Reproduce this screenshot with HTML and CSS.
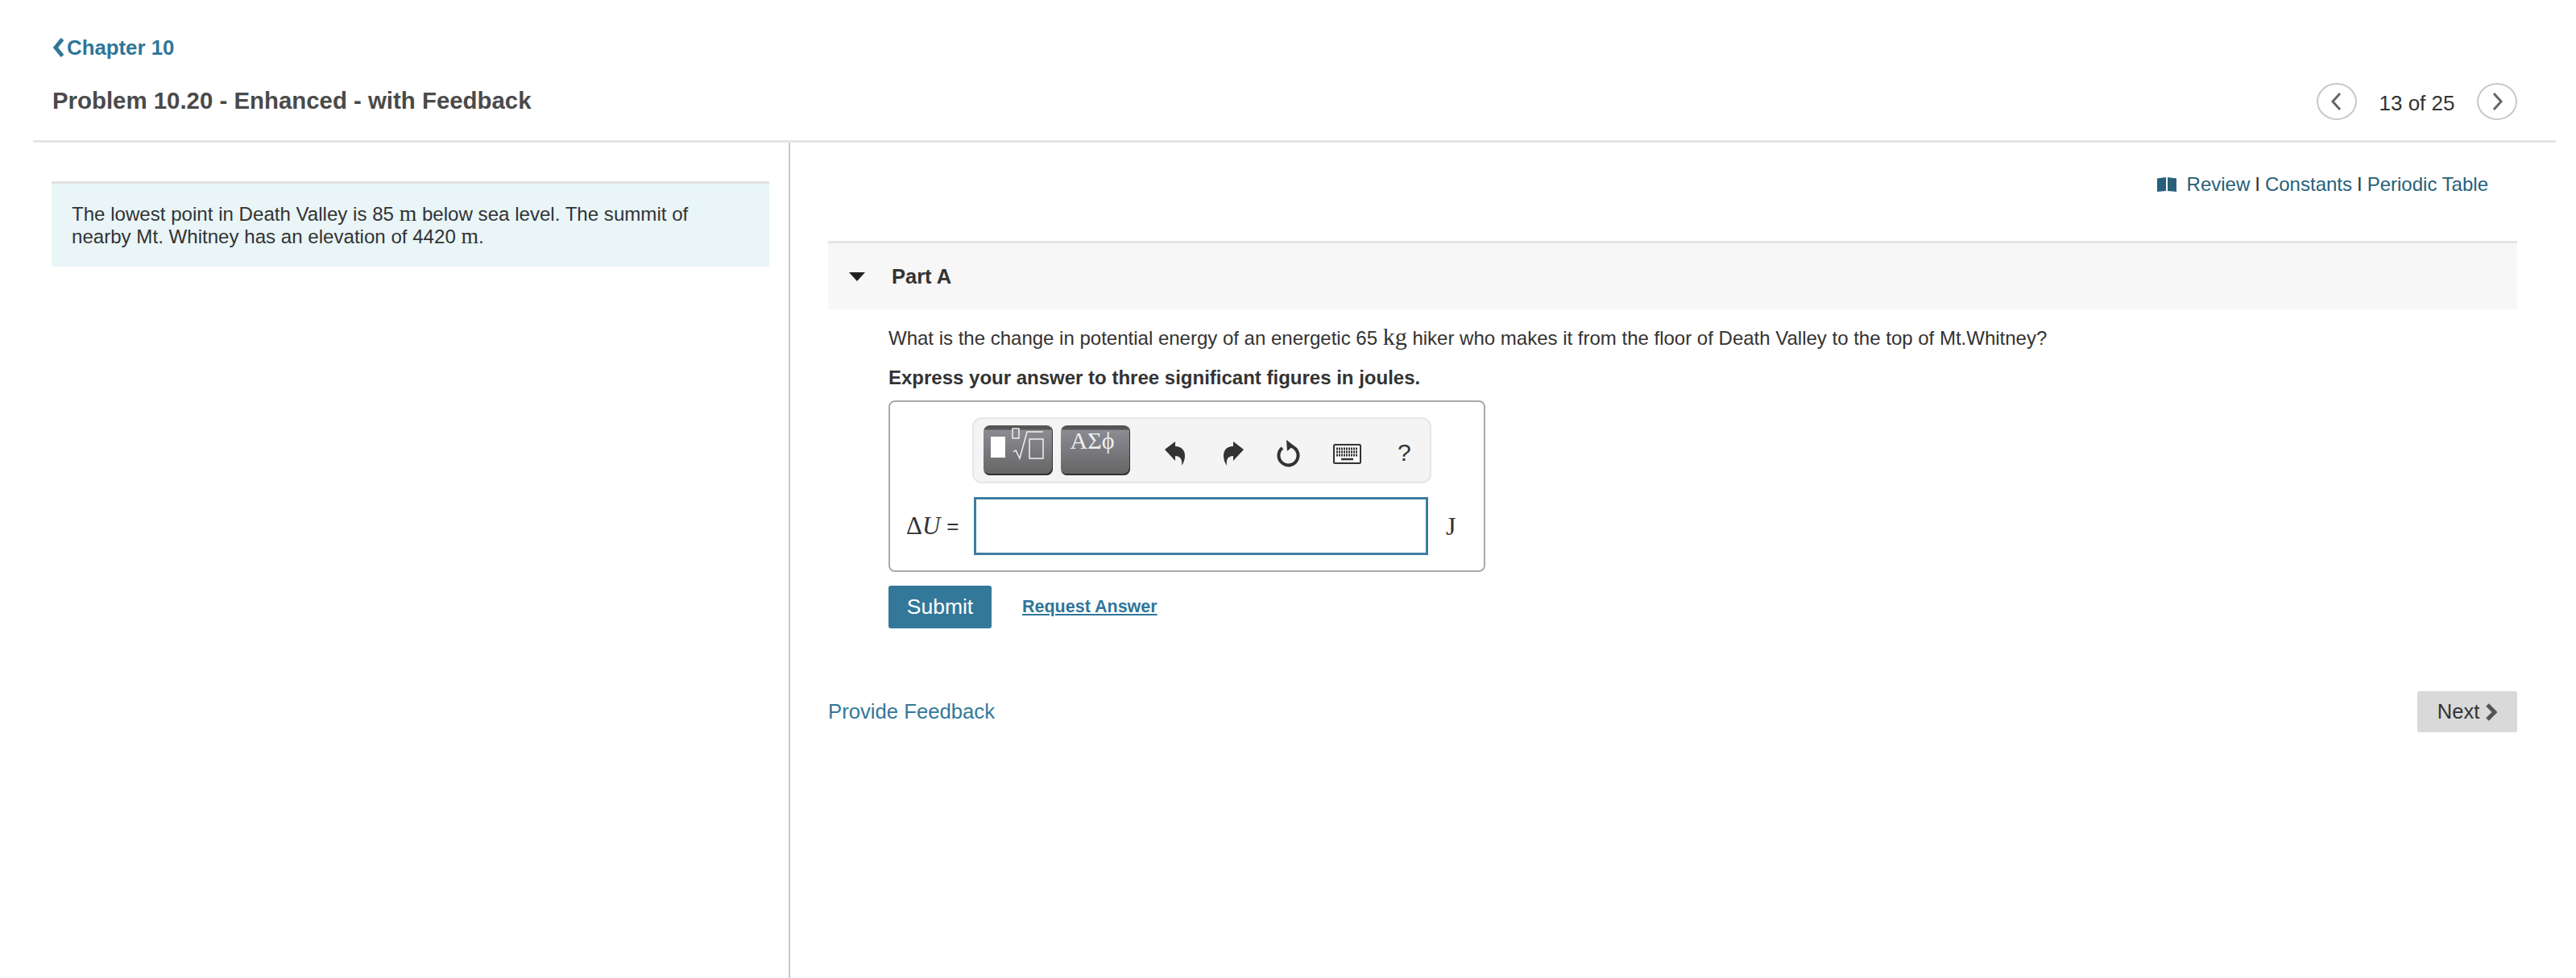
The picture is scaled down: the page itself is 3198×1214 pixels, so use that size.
FILE: index.html
```html
<!DOCTYPE html>
<html>
<head>
	<title>Problem 10.20 - Enhanced - with Feedback</title>
	<link rel="stylesheet" href="styles.css">
</head>
<body>
	<div class="header">
		<a class="chapter-link" href="#">
			<svg class="chapter-chevron" viewBox="0 0 15 26"><path d="M12.5 2.5 4 13l8.500 10.500" /></svg>
			<span>Chapter 10</span>
		</a>
		<div class="title-row">
			<h1 class="title">Problem 10.20 - Enhanced - with Feedback</h1>
			<div class="pager">
				<a class="pager-btn" href="#"><svg viewBox="0 0 46 42"><path d="M27 11 18 21l9 10" /></svg></a>
				<span class="pager-text">13 of 25</span>
				<a class="pager-btn" href="#"><svg viewBox="0 0 46 42"><path d="M19 11l9 10-9 10" /></svg></a>
			</div>
		</div>
	</div>

	<div class="columns">
		<div class="left-col">
			<div class="intro">
				<div>The lowest point in Death Valley is 85 <span class="math">m</span> below sea level. The summit of</div>
				<div>nearby Mt. Whitney has an elevation of 4420 <span class="math">m</span>.</div>
			</div>
		</div>

		<div class="right-col">
			<div class="resources">
				<svg class="book" viewBox="0 0 24 18"><path d="M0 1.500 11 0v17L0 18zM24 1.500 13 0v17l11 1z" /></svg>
				<a href="#">Review</a><span class="sep">I</span><a href="#">Constants</a><span class="sep">I</span><a href="#">Periodic Table</a>
			</div>

			<div class="part-head">
				<span class="part-arrow"></span>
				<span class="part-name">Part A</span>
			</div>

			<div class="part-body">
				<p class="question">What is the change in potential energy of an energetic 65 <span class="math kg">kg</span> hiker who makes it from the floor of Death Valley to the top of Mt.Whitney?</p>
				<p class="instruction">Express your answer to three significant figures in joules.</p>

				<div class="answer-box">
					<div class="toolbar">
						<button class="tool-btn">
							<svg viewBox="0 0 86 62">
								<rect x="9" y="14" width="18" height="26" fill="#fff" />
								<g fill="none" stroke="#f2f2f2" stroke-width="1.500">
									<rect x="36" y="4" width="8" height="12" />
									<rect x="57" y="17" width="17" height="24" />
									<path d="M37 33l3 -2 5 10 9 -33h20" />
								</g>
							</svg>
						</button>
						<button class="tool-btn tool-greek">ΑΣϕ</button>
						<svg class="tool-icon undo" viewBox="0 0 26 32"><path d="M0 11 13 1v6c8 0 12 5 12 12 0 5-2 9-4 12 1-7-1-12-8-12v6z" /></svg>
						<svg class="tool-icon redo" viewBox="0 0 26 32"><path d="M26 11 13 1v6C5 7 1 12 1 19c0 5 2 9 4 12-1-7 1-12 8-12v6z" /></svg>
						<svg class="tool-icon reset" viewBox="0 0 30 34"><path class="ring" d="M17 7.500a12 12 0 1 1-9 2.500" /><path d="M13 0l9 7-8 7z" /></svg>
						<svg class="tool-icon keys" viewBox="0 0 35 25">
							<rect x="1" y="1" width="33" height="23" rx="1.500" fill="#fff" stroke="#333" stroke-width="2" />
							<path d="M4 6h27M4 10h27M4 14h27" stroke="#333" stroke-width="3" stroke-dasharray="2 1" />
							<path d="M10 19h15" stroke="#333" stroke-width="2.500" />
						</svg>
						<span class="tool-help">?</span>
					</div>
					<div class="answer-row">
						<span class="answer-label"><span class="math-delta">Δ<i>U</i></span><span class="equals">=</span></span>
						<input class="answer-input" type="text">
						<span class="answer-unit">J</span>
					</div>
				</div>

				<div class="actions">
					<button class="submit">Submit</button>
					<a class="request" href="#">Request Answer</a>
				</div>
			</div>

			<div class="footer-row">
				<a class="feedback" href="#">Provide Feedback</a>
				<a class="next" href="#">Next<svg viewBox="0 0 15 24"><path d="M3 3l9 9-9 9" /></svg></a>
			</div>
		</div>
	</div>
</body>
</html>
```

FILE: styles.css
```css
html, body {
	margin: 0;
	height: 100%;
}

body {
	font-family: "Liberation Sans", Arial, sans-serif;
	color: #333;
	background: #fff;
	display: flex;
	flex-direction: column;
}

a {
	text-decoration: none;
}

.math {
	font-family: "Liberation Serif", serif;
	font-size: 1.15em;
	line-height: 0;
}

.kg {
	font-size: 1.25em;
}

/* header */
.header {
	margin: 0 25px 0 41px;
	padding: 41px 0 0 24px;
	height: 133px;
	border-bottom: 3px solid #e4e4e4;
	flex: none;
}

.chapter-link {
	display: flex;
	align-items: center;
	gap: 3px;
	height: 36px;
	color: #2f7698;
	font-size: 25.800px;
	font-weight: bold;
}

.chapter-chevron {
	width: 15px;
	height: 26px;
	fill: none;
	stroke: #2f7698;
	stroke-width: 5;
}

.title-row {
	display: flex;
	justify-content: space-between;
	align-items: center;
	margin-top: 23px;
	height: 50px;
	padding-right: 48px;
}

.title {
	margin: 0;
	font-size: 29.400px;
	font-weight: bold;
	color: #4a4a4a;
}

.pager {
	display: flex;
	align-items: center;
	margin-top: 2px;
}

.pager-btn {
	display: block;
	width: 50px;
	height: 46px;
	box-sizing: border-box;
	border: 2px solid #c8c8c8;
	border-radius: 50%;
}

.pager-btn svg {
	display: block;
	width: 46px;
	height: 42px;
	fill: none;
	stroke: #666;
	stroke-width: 3;
}

.pager-text {
	width: 149px;
	text-align: center;
	font-size: 26px;
	color: #333;
	padding-top: 4px;
}

/* two columns */
.columns {
	flex: 1;
	display: flex;
}

.left-col {
	box-sizing: border-box;
	padding: 48px 24px 0 64px;
	border-right: 2px solid #b9cddd;
	flex: none;
	width: 981px;
}

.intro {
	background: #e9f5f7;
	border-top: 3px solid #e1e3e4;
	padding: 24px 25px 23px;
	font-size: 24.100px;
	line-height: 28px;
	color: #333;
}

.right-col {
	flex: 1;
	padding: 0 73px 0 47px;
}

.resources {
	display: flex;
	align-items: center;
	justify-content: flex-end;
	height: 103px;
	padding: 0 36px 0 0;
	font-size: 24px;
	margin-bottom: 19px;
}

.resources a {
	color: #27607a;
}

.book {
	width: 24px;
	height: 18px;
	fill: #27607a;
	margin-right: 13px;
}

.sep {
	margin: 0 6px;
	color: #333;
}

/* part */
.part-head {
	display: flex;
	align-items: center;
	height: 82px;
	background: #f7f7f7;
	border-top: 3px solid #e5e5e5;
}

.part-arrow {
	width: 0;
	height: 0;
	margin-left: 26px;
	border-left: 10px solid transparent;
	border-right: 10px solid transparent;
	border-top: 11px solid #222;
}

.part-name {
	margin-left: 33px;
	font-size: 25.500px;
	font-weight: bold;
	color: #333;
}

.part-body {
	padding-left: 75px;
}

.question {
	margin: 20px 0 0;
	font-size: 24px;
	line-height: 32px;
	color: #333;
}

.instruction {
	margin: 17px 0 0;
	font-size: 24px;
	line-height: 32px;
	font-weight: bold;
	color: #333;
}

/* answer box */
.answer-box {
	width: 741px;
	height: 213px;
	box-sizing: border-box;
	margin-top: 12px;
	border: 2px solid #aaa;
	border-radius: 8px;
}

.toolbar {
	display: flex;
	align-items: center;
	width: 570px;
	height: 82px;
	box-sizing: border-box;
	margin: 19px 0 0 102px;
	padding-left: 12px;
	background: #f4f4f4;
	border: 2px solid #e6e6e6;
	border-radius: 12px;
}

.tool-btn {
	width: 86px;
	height: 62px;
	box-sizing: border-box;
	padding: 0;
	margin-right: 10px;
	border: 0;
	border-radius: 8px;
	background: linear-gradient(#555 0, #555 5px, #8b8b93 6px, #656565);
	box-shadow: inset -1px -2px 0 #333;
}

.tool-btn svg {
	display: block;
	width: 86px;
	height: 62px;
}

.tool-greek {
	font-family: "Liberation Serif", serif;
	font-size: 30px;
	line-height: 30px;
	color: #f0f0f0;
	padding: 0 8px 24px 0;
}

.tool-icon {
	flex: none;
	fill: #333;
	margin-top: 8px;
}

.undo {
	width: 26px;
	height: 32px;
	margin-left: 33px;
}

.redo {
	width: 26px;
	height: 32px;
	margin-left: 46px;
}

.reset {
	width: 30px;
	height: 34px;
	margin-left: 40px;
}

.reset .ring {
	fill: none;
	stroke: #333;
	stroke-width: 4;
}

.keys {
	width: 35px;
	height: 25px;
	margin-left: 41px;
}

.tool-help {
	margin: 6px 0 0 45px;
	font-size: 30px;
	color: #333;
}

.answer-row {
	display: flex;
	align-items: center;
	margin-top: 17px;
	height: 72px;
}

.answer-label {
	display: flex;
	align-items: center;
	width: 104px;
	box-sizing: border-box;
	padding-left: 20px;
	white-space: nowrap;
}

.math-delta {
	font-family: "Liberation Serif", serif;
	font-size: 31px;
}

.equals {
	margin-left: 8px;
	font-size: 26px;
}

.answer-input {
	width: 564px;
	height: 72px;
	box-sizing: border-box;
	margin: 0;
	border: 3px solid #3d7d9e;
	background: #fff;
}

.answer-unit {
	margin-left: 22px;
	font-family: "Liberation Serif", serif;
	font-size: 32px;
}

/* actions */
.actions {
	display: flex;
	align-items: center;
	margin-top: 17px;
}

.submit {
	width: 128px;
	height: 53px;
	padding: 0;
	border: 0;
	border-radius: 3px;
	background: #337899;
	color: #fff;
	font-family: "Liberation Sans", Arial, sans-serif;
	font-size: 26.500px;
}

.request {
	margin-left: 38px;
	color: #2f7698;
	font-size: 21.500px;
	font-weight: bold;
	text-decoration: underline;
}

.footer-row {
	display: flex;
	justify-content: space-between;
	align-items: center;
	margin-top: 78px;
	height: 51px;
}

.feedback {
	color: #337899;
	font-size: 25.700px;
}

.next {
	display: flex;
	align-items: center;
	justify-content: center;
	gap: 7px;
	width: 124px;
	height: 51px;
	background: #d9d9d9;
	border-radius: 3px;
	color: #333;
	font-size: 25.500px;
}

.next svg {
	width: 15px;
	height: 24px;
	fill: none;
	stroke: #555;
	stroke-width: 5;
}
```
